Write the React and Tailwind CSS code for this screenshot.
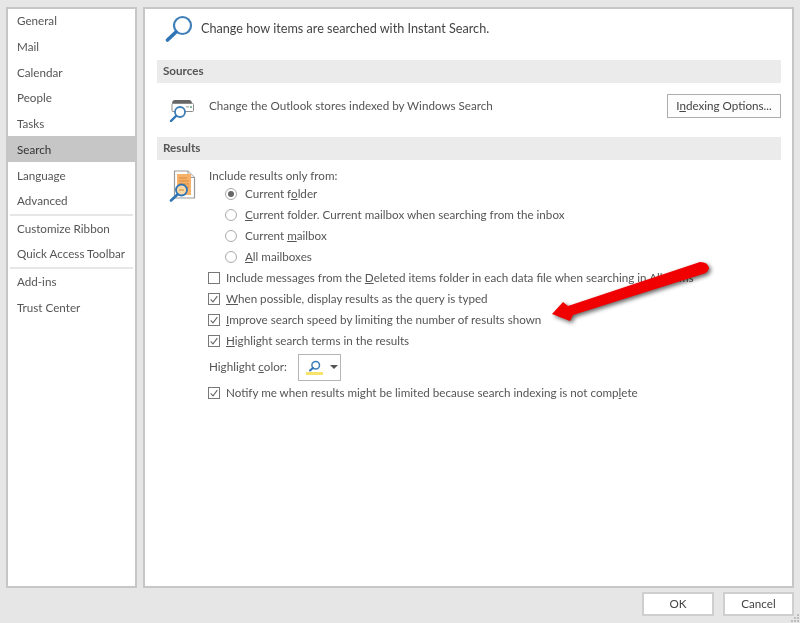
const navTop = ["General", "Mail", "Calendar", "People", "Tasks", "Search", "Language", "Advanced"];
const navMid = ["Customize Ribbon", "Quick Access Toolbar"];
const navEnd = ["Add-ins", "Trust Center"];

function NavItem({ label }) {
  const active = label === "Search";
  return (
    <div className={`h-[25.75px] pl-[9px] pt-[1px] flex items-center whitespace-nowrap ${active ? "bg-[#c6c6c6] text-[#333]" : "text-[#555]"}`}>
      {label}
    </div>
  );
}

function Magnifier({ className }) {
  return (
    <svg viewBox="0 0 28 28" className={className} fill="none">
      <circle cx="17.5" cy="10.5" r="8.5" stroke="#3f7fb8" strokeWidth="2.2" />
      <path d="M11 17 L2.5 25" stroke="#2f75b5" strokeWidth="3.6" strokeLinecap="round" />
    </svg>
  );
}

function DriveIcon() {
  return (
    <svg viewBox="0 0 26 24" className="w-[26px] h-[24px]" fill="none">
      <path d="M3 6 Q3 2 6 2 H20 Q23 2 23 6 Z" fill="#666" />
      <rect x="3" y="5.5" width="21.5" height="8" rx="1" fill="#fff" stroke="#8a8a8a" />
      <rect x="17" y="8" width="3" height="1.5" fill="#bbb" />
      <circle cx="22" cy="9" r="1" fill="#5aa77a" />
      <circle cx="11" cy="14" r="5" fill="#fff" stroke="#3f7fb8" strokeWidth="1.8" />
      <path d="M7 18 L2 23" stroke="#2f75b5" strokeWidth="2.4" strokeLinecap="round" />
    </svg>
  );
}

function DocIcon() {
  return (
    <svg viewBox="0 0 28 32" className="w-[28px] h-[32px]" fill="none">
      <path d="M6.5 1 H20 L26.5 7.500 V28 H6.500 Z" fill="#fff" stroke="#9a9a9a" strokeWidth="1.200" />
      <path d="M20 1 V7.500 H26.500" fill="#eee" stroke="#9a9a9a" />
      <rect x="9" y="4" width="14" height="21" fill="#f6b26b" />
      <path d="M11 8 H19 M11 11 H21 M11 14 H21 M11 17 H21" stroke="#d98a3a" strokeWidth="1" />
      <circle cx="13.500" cy="20" r="5.500" fill="#f9d9a8" stroke="#2f75b5" strokeWidth="1.800" />
      <path d="M11 20 H16" stroke="#c98a3a" />
      <path d="M9.500 24.500 L3 30.500" stroke="#2f75b5" strokeWidth="2.600" strokeLinecap="round" />
    </svg>
  );
}

function Radio({ checked, children }) {
  return (
    <div className="h-[21px] flex items-center pl-[16px]">
      <span className="w-[12px] h-[12px] rounded-full border border-[#a9a9a9] bg-white flex items-center justify-center">
        {checked && <span className="w-[6px] h-[6px] rounded-full bg-[#666]" />}
      </span>
      <span className="ml-[8px]">{children}</span>
    </div>
  );
}

function Check({ checked, children }) {
  return (
    <div className="h-[21px] flex items-center">
      <span className="w-[12px] h-[12px] border border-[#777] bg-white flex items-center justify-center shrink-0">
        {checked && (
          <svg viewBox="0 0 12 12" className="w-[10px] h-[10px]" fill="none">
            <path d="M2 6.500 L4.800 9.500 L10 2.500" stroke="#666" strokeWidth="1.300" />
          </svg>
        )}
      </span>
      <span className="ml-[6px] whitespace-nowrap">{children}</span>
    </div>
  );
}

function SectionHead({ children }) {
  return (
    <div className="h-[23px] bg-[#ebebeb] pl-[6px] pb-[2px] flex items-center font-bold text-[#555]">
      {children}
    </div>
  );
}

export default function App() {
  return (
    <div className="relative w-[800px] h-[623px] bg-[#e6e6e6] overflow-hidden text-[11.65px] text-[#555] font-['Lato',sans-serif] pt-[7px] blur-[0.35px]">
      <div className="flex h-[581px] pl-[6px] pr-[6px] gap-[6px]">
        {/* Sidebar */}
        <aside className="w-[131px] bg-white border-2 border-[#c6c6c6]">
          <div className="-mt-[1.500px]">
            {navTop.map((n) => (
              <NavItem key={n} label={n} />
            ))}
          </div>
          <div className="h-[2px] bg-[#e6e6e6] mx-[2px]" />
          <div className="-mt-[0.500px]">
            {navMid.map((n) => (
              <NavItem key={n} label={n} />
            ))}
          </div>
          <div className="h-[2px] bg-[#e6e6e6] mx-[2px]" />
          <div className="mt-[0.250px]">
            {navEnd.map((n) => (
              <NavItem key={n} label={n} />
            ))}
          </div>
        </aside>

        {/* Main panel */}
        <main className="flex-1 bg-white border-2 border-[#c6c6c6] pl-[12px] pr-[11px]">
          <div className="h-[51px] flex items-center pl-[8px] pb-[10px]">
            <Magnifier className="w-[28px] h-[28px] -mt-[2px]" />
            <span className="ml-[8px] text-[12.65px] text-[#444]">Change how items are searched with Instant Search.</span>
          </div>

          <SectionHead>Sources</SectionHead>
          <div className="h-[54px] flex items-center pl-[12px] pb-[9px]">
            <div className="mt-[9px]">
              <DriveIcon />
            </div>
            <span className="ml-[14px]">Change the Outlook stores indexed by Windows Search</span>
            <button className="ml-auto w-[114px] h-[24px] border border-[#adadad] bg-[#fdfdfd] text-[#444]">
              I<u>n</u>dexing Options...
            </button>
          </div>

          <SectionHead>Results</SectionHead>
          <div className="flex pt-[5px]">
            <div className="w-[52px] pl-[11px] pt-[5px]">
              <DocIcon />
            </div>
            <div className="flex-1">
              <div className="h-[22px] flex items-center">Include results only from:</div>
              <div className="-mt-[4px]">
                <Radio checked>
                  Current f<u>o</u>lder
                </Radio>
                <Radio>
                  <u>C</u>urrent folder. Current mailbox when searching from the inbox
                </Radio>
                <Radio>
                  Current <u>m</u>ailbox
                </Radio>
                <Radio>
                  <u>A</u>ll mailboxes
                </Radio>
              </div>
              <div className="-ml-[1px]">
                <Check>
                  Include messages from the <u>D</u>eleted items folder in each data file when searching in All Items
                </Check>
                <Check checked>
                  <u>W</u>hen possible, display results as the query is typed
                </Check>
                <Check checked>
                  <u>I</u>mprove search speed by limiting the number of results shown
                </Check>
                <Check checked>
                  <u>H</u>ighlight search terms in the results
                </Check>
                <div className="h-[31px] flex items-center pt-[1px]">
                  <span className="w-[90px] pl-[1px]">
                    Highlight <u>c</u>olor:
                  </span>
                  <div className="w-[43px] h-[27px] border border-[#b5b5b5] flex items-center pl-[7px] gap-[7px]">
                    <svg viewBox="0 0 17 17" className="w-[17px] h-[17px]" fill="none">
                      <rect x="0" y="13" width="17" height="3" fill="#f7e36a" />
                      <circle cx="9.700" cy="6.300" r="3.800" stroke="#3f7fb8" strokeWidth="1.500" />
                      <path d="M7 9 L4 11.500" stroke="#2f75b5" strokeWidth="2" strokeLinecap="round" />
                    </svg>
                    <span className="w-0 h-0 border-x-[4px] border-x-transparent border-t-[4px] border-t-[#555]" />
                  </div>
                </div>
                <Check checked>
                  Notify me when results might be limited because search indexing is not comp<u>l</u>ete
                </Check>
              </div>
            </div>
          </div>
        </main>
      </div>

      {/* Footer buttons */}
      <div className="flex justify-end gap-[9px] pr-[6px] pt-[4px]">
        <button className="w-[72px] h-[24px] border-2 border-[#cfcfcf] bg-white text-[#444]">OK</button>
        <button className="w-[71px] h-[24px] border-2 border-[#cfcfcf] bg-white text-[#444]">Cancel</button>
      </div>

      {/* Resize grip */}
      <svg viewBox="0 0 10 10" className="absolute right-0 bottom-0 w-[10px] h-[10px]">
        <path d="M7 1h2v2H7zM4 4h2v2H4zM7 4h2v2H7zM1 7h2v2H1zM4 7h2v2H4zM7 7h2v2H7z" fill="#bdbdbd" />
      </svg>

      {/* Annotation arrow */}
      <svg viewBox="0 0 800 623" className="absolute inset-0 w-[800px] h-[623px] pointer-events-none drop-shadow-[2px_2px_2px_rgba(0,0,0,0.6)]">
        <path d="M552 314 L563 302 L568 306 L700 262 Q708 262 709 268 Q708 273 703 274 L573 315 L570 321 Z" fill="#f00000" />
      </svg>
    </div>
  );
}
